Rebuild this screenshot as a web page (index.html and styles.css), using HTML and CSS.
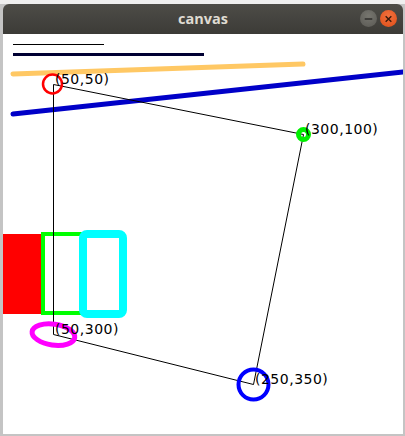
FILE: index.html
```html
<!DOCTYPE html>
<html>
<head>
<meta charset="utf-8">
<link rel="stylesheet" href="styles.css">
</head>
<body>
<div class="window">
  <div class="titlebar">
    <span class="title">canvas</span>
    <div class="buttons">
      <span class="btn btn-min"><svg width="18" height="18" viewBox="0 0 18 18"><line x1="5" y1="9" x2="13" y2="9" stroke="#2f2e2b" stroke-width="1.6"/></svg></span>
      <span class="btn btn-close"><svg width="18" height="18" viewBox="0 0 18 18"><path d="M6 6 L12 12 M12 6 L6 12" stroke="#3a1a0c" stroke-width="1.5"/></svg></span>
    </div>
  </div>
  <div class="canvas">
    <svg class="drawing" width="400" height="400" viewBox="0 0 400 400">
      <line x1="10" y1="10.5" x2="101" y2="10.5" stroke="#000" stroke-width="1"/>
      <line x1="10" y1="20.5" x2="201" y2="20.5" stroke="#000033" stroke-width="3"/>
      <line x1="10" y1="40" x2="300" y2="30" stroke="#ffc864" stroke-width="5" stroke-linecap="round"/>
      <line x1="10" y1="80" x2="400" y2="38" stroke="#0000c8" stroke-width="5" stroke-linecap="round"/>

      <rect x="0" y="200" width="40" height="80" fill="#ff0000"/>
      <rect x="40" y="200" width="40" height="79" fill="none" stroke="#00ff00" stroke-width="4"/>
      <rect x="80" y="200" width="40" height="80" rx="4" ry="4" fill="none" stroke="#00ffff" stroke-width="8"/>

      <polygon points="50.5,50.5 300.5,100.5 250.5,350.5 50.5,300.5" fill="none" stroke="#000" stroke-width="1"/>

      <circle cx="49.5" cy="50" r="9.5" fill="none" stroke="#ff0000" stroke-width="2.5"/>
      <circle cx="300.5" cy="100.5" r="5" fill="none" stroke="#00f000" stroke-width="5"/>
      <circle cx="250.5" cy="350.5" r="15" fill="none" stroke="#0000ff" stroke-width="4"/>
      <ellipse cx="50.5" cy="300.5" rx="21.5" ry="10.5" transform="rotate(8 50 300)" fill="none" stroke="#ff00ff" stroke-width="5"/>

      <text class="label" x="52" y="50">(50,50)</text>
      <text class="label" x="302" y="100">(300,100)</text>
      <text class="label" x="252" y="350">(250,350)</text>
      <text class="label" x="52" y="300">(50,300)</text>
    </svg>
  </div>
</div>
</body>
</html>
```
FILE: styles.css
```css
html, body {
  margin: 0;
  padding: 0;
}
body {
  width: 405px;
  height: 436px;
  overflow: hidden;
  background: linear-gradient(#efefef 0, #efefef 4px, #c4c4c4 4px);
}
.window {
  margin: 4px 0 0 3px;
  width: 400px;
}
.titlebar {
  height: 30px;
  border-radius: 6px 6px 0 0;
  background: linear-gradient(#4d4c47, #3c3b37);
  display: flex;
  align-items: center;
  justify-content: center;
  position: relative;
}
.title {
  font-family: "Open Sans", "DejaVu Sans", sans-serif;
  font-weight: 700;
  font-size: 14.5px;
  color: #dfdbd2;
  margin-top: -1px;
}
.buttons {
  position: absolute;
  right: 6px;
  top: 6px;
  display: flex;
  gap: 3px;
}
.btn {
  width: 17px;
  height: 17px;
  border-radius: 50%;
  display: flex;
  align-items: center;
  justify-content: center;
}
.btn svg {
  display: block;
}
.btn-min {
  background: radial-gradient(circle at 50% 35%, #77766f, #5a5954);
}
.btn-close {
  background: radial-gradient(circle at 50% 35%, #f2713e, #de4d17);
}
.canvas {
  width: 400px;
  height: 400px;
  background: #ffffff;
}
.drawing {
  display: block;
}
.label {
  font-family: "DejaVu Sans", sans-serif;
  font-size: 14px;
  letter-spacing: 0.5px;
  fill: #000;
}
```
